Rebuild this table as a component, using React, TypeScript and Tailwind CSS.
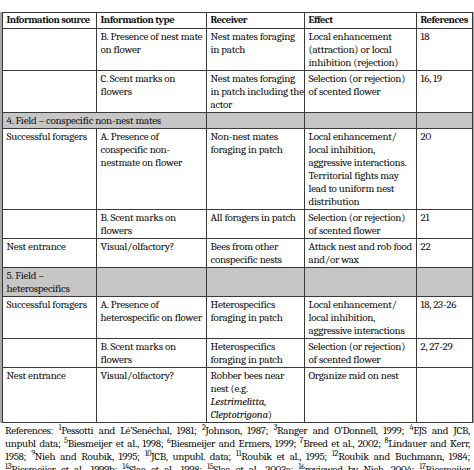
import React from 'react';

type Lines = React.ReactNode[];

type DataRow = { kind: 'data'; h: number; cells: Lines[] };
type SectionRow = { kind: 'section'; h: number; span: number; label: Lines };
type Row = DataRow | SectionRow;

const rows: Row[] = [
  {
    kind: 'data',
    h: 42,
    cells: [
      [],
      ['B. Presence of nest mate', 'on flower'],
      ['Nest mates foraging', 'in patch'],
      ['Local enhancement', '(attraction) or local', 'inhibition (rejection)'],
      ['18'],
    ],
  },
  {
    kind: 'data',
    h: 42,
    cells: [
      [],
      ['C. Scent marks on', 'flowers'],
      ['Nest mates foraging', 'in patch including the', 'actor'],
      ['Selection (or rejection)', 'of scented flower'],
      ['16, 19'],
    ],
  },
  { kind: 'section', h: 16, span: 2, label: ['4. Field \u2013 conspecific non-nest mates'] },
  {
    kind: 'data',
    h: 81,
    cells: [
      ['Successful foragers'],
      ['A. Presence of', 'conspecific non-', 'nestmate on flower'],
      ['Non-nest mates', 'foraging in patch'],
      [
        'Local enhancement/',
        'local inhibition,',
        'aggressive interactions.',
        'Territorial fights may',
        'lead to uniform nest',
        'distribution',
      ],
      ['20'],
    ],
  },
  {
    kind: 'data',
    h: 29,
    cells: [
      [],
      ['B. Scent marks on', 'flowers'],
      ['All foragers in patch'],
      ['Selection (or rejection)', 'of scented flower'],
      ['21'],
    ],
  },
  {
    kind: 'data',
    h: 29,
    cells: [
      ['Nest entrance'],
      ['Visual/olfactory?'],
      ['Bees from other', 'conspecific nests'],
      ['Attack nest and rob food', 'and/or wax'],
      ['22'],
    ],
  },
  { kind: 'section', h: 29, span: 1, label: ['5. Field \u2013', 'heterospecifics'] },
  {
    kind: 'data',
    h: 42,
    cells: [
      ['Successful foragers'],
      ['A. Presence of', 'heterospecific on flower'],
      ['Heterospecifics', 'foraging in patch'],
      ['Local enhancement/', 'local inhibition,', 'aggressive interactions'],
      ['18, 23-26'],
    ],
  },
  {
    kind: 'data',
    h: 29,
    cells: [
      [],
      ['B. Scent marks on', 'flowers'],
      ['Heterospecifics', 'foraging in patch'],
      ['Selection (or rejection)', 'of scented flower'],
      ['2, 27-29'],
    ],
  },
  {
    kind: 'data',
    h: 55,
    cells: [
      ['Nest entrance'],
      ['Visual/olfactory?'],
      [
        'Robber bees near',
        'nest (e.g.',
        <i>Lestrimelitta,</i>,
        <>
          <i>Cleptotrigona</i>)
        </>,
      ],
      ['Organize raid on nest'],
      [],
    ],
  },
];

const headers = ['Information source', 'Information type', 'Receiver', 'Effect', 'References'];
const colWidths = ['w-[94px]', 'w-[110px]', 'w-[98px]', 'w-[112px]', 'w-[56px]'];

const cellCls = 'border border-[#3a3a3a] align-top pl-[4px] pr-[2px] pt-[1px] leading-[13px]';

function CellLines({ lines }: { lines: Lines }) {
  return (
    <>
      {lines.map((l, i) => (
        <div key={i} className="whitespace-nowrap">
          {l}
        </div>
      ))}
    </>
  );
}

const footLines: React.ReactNode[] = [
  <>
    References: <sup>1</sup>Pessotti and Lé’Senéchal, 1981; <sup>2</sup>Johnson, 1987; <sup>3</sup>Ranger and
    O’Donnell, 1999; <sup>4</sup>EJS and JCB,
  </>,
  <>
    unpubl data; <sup>5</sup>Biesmeijer et al., 1998; <sup>6</sup>Biesmeijer and Ermers, 1999; <sup>7</sup>Breed et
    al., 2002; <sup>8</sup>Lindauer and Kerr,
  </>,
  <>
    1958; <sup>9</sup>Nieh and Roubik, 1995; <sup>10</sup>JCB, unpubl. data; <sup>11</sup>Roubik et al., 1995;{' '}
    <sup>12</sup>Roubik and Buchmann, 1984;
  </>,
  <>
    <sup>13</sup>Biesmeijer et al., 1999b; <sup>14</sup>Slaa et al., 1998; <sup>15</sup>Slaa et al., 2003a;{' '}
    <sup>16</sup>reviewed by Nieh, 2004; <sup>17</sup>Biesmeijer
  </>,
];

export default function App() {
  return (
    <div className="w-[474px] h-[470px] overflow-hidden bg-white text-[#111] font-serif text-[11px] tracking-[-0.25px]">
      <div className="mt-[-10px] mb-[9px] pl-[4px] leading-[13px] text-[#555]">Table 2. Continued.</div>

      <div className="flex">
        <div className="w-[2px] bg-[#a8a8a8]" />
        <table className="w-[470px] table-fixed border-collapse">
          <colgroup>
            {colWidths.map((w, i) => (
              <col key={i} className={w} />
            ))}
          </colgroup>
          <thead>
            <tr className="h-[16px]">
              {headers.map((h) => (
                <th key={h} className={`${cellCls} text-left font-bold text-[10.5px] tracking-[-0.45px]`}>
                  <div className="whitespace-nowrap">{h}</div>
                </th>
              ))}
            </tr>
          </thead>
          <tbody>
            {rows.map((row, ri) =>
              row.kind === 'section' ? (
                <tr key={ri} className="bg-[#c6c6c6]" style={{ height: row.h }}>
                  <td colSpan={row.span} className={cellCls}>
                    <CellLines lines={row.label} />
                  </td>
                  {Array.from({ length: 5 - row.span }).map((_, i) => (
                    <td key={i} className={cellCls} />
                  ))}
                </tr>
              ) : (
                <tr key={ri} style={{ height: row.h }}>
                  {row.cells.map((c, ci) => (
                    <td key={ci} className={cellCls}>
                      <CellLines lines={c} />
                    </td>
                  ))}
                </tr>
              )
            )}
          </tbody>
        </table>
        <div className="w-[2px] bg-[#a8a8a8]" />
      </div>

      <div className="pl-[5px] pr-[4px] pt-[1px] leading-[13px] tracking-[-0.3px]">
        {footLines.map((l, i) => (
          <div key={i} className="whitespace-nowrap text-justify [text-align-last:justify]">
            {l}
          </div>
        ))}
      </div>
    </div>
  );
}
